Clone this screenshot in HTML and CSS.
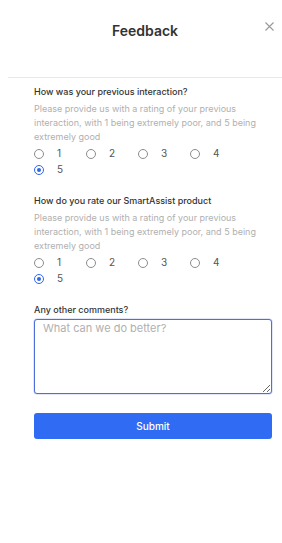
FILE: index.html
```html
<!DOCTYPE html>
<html lang="en">
<head>
<meta charset="utf-8">
<title>Feedback</title>
<link rel="stylesheet" href="styles.css">
</head>
<body>
<div class="panel">
  <header class="header">
    <h1 class="title">Feedback</h1>
    <button class="close" aria-label="Close">
      <svg width="9" height="9" viewBox="0 0 9 9"><path d="M0.5 0.5L8.5 8.5M8.5 0.5L0.5 8.5" stroke="#9a9a9a" stroke-width="1.1" fill="none"/></svg>
    </button>
  </header>
  <main class="content">
    <section class="question">
      <div class="q-title">How was your previous interaction?</div>
      <div class="q-desc">Please provide us with a rating of your previous interaction, with 1 being extremely poor, and 5 being extremely good</div>
      <div class="options">
        <label class="opt"><span class="radio"></span><span class="num">1</span></label>
        <label class="opt"><span class="radio"></span><span class="num">2</span></label>
        <label class="opt"><span class="radio"></span><span class="num">3</span></label>
        <label class="opt"><span class="radio"></span><span class="num">4</span></label>
        <label class="opt"><span class="radio checked"></span><span class="num">5</span></label>
      </div>
    </section>
    <section class="question">
      <div class="q-title">How do you rate our SmartAssist product</div>
      <div class="q-desc">Please provide us with a rating of your previous interaction, with 1 being extremely poor, and 5 being extremely good</div>
      <div class="options">
        <label class="opt"><span class="radio"></span><span class="num">1</span></label>
        <label class="opt"><span class="radio"></span><span class="num">2</span></label>
        <label class="opt"><span class="radio"></span><span class="num">3</span></label>
        <label class="opt"><span class="radio"></span><span class="num">4</span></label>
        <label class="opt"><span class="radio checked"></span><span class="num">5</span></label>
      </div>
    </section>
    <section class="comments">
      <div class="q-title">Any other comments?</div>
      <textarea class="input" placeholder="What can we do better?"></textarea>
    </section>
    <button class="submit">Submit</button>
  </main>
</div>
</body>
</html>
```
FILE: styles.css
```css
* { box-sizing: border-box; }
html, body { margin: 0; padding: 0; background: #fff; }
body { font-family: Inter, "Noto Sans", sans-serif; color: #333; }

.panel { width: 282px; height: 543px; }

.header {
  height: 78px;
  margin-left: 8px;
  border-bottom: 1px solid #e8e8e8;
  display: flex;
  justify-content: center;
  align-items: flex-start;
  position: relative;
}
.title {
  margin: 22px 0 0 0;
  font-size: 14px;
  line-height: 18px;
  font-weight: 600;
  color: #333;
}
.close {
  position: absolute;
  top: 22px;
  right: 8px;
  padding: 0;
  border: 0;
  background: none;
  width: 9px;
  height: 9px;
  display: block;
}
.close svg { display: block; }

.content { padding: 7px 10px 0 34px; }

.question { margin-bottom: 16px; }
.q-title {
  font-size: 9px;
  line-height: 14px;
  font-weight: 500;
  color: #333;
}
.q-desc {
  margin-top: 3px;
  font-size: 9px;
  line-height: 14px;
  color: #b0b0b0;
}
.options {
  display: flex;
  flex-wrap: wrap;
  margin-top: 2px;
}
.opt {
  width: 52px;
  height: 16px;
  display: flex;
  align-items: center;
}
.radio {
  width: 10px;
  height: 10px;
  border: 1px solid #8c8c8c;
  border-radius: 50%;
  flex: none;
  position: relative;
}
.radio.checked {
  border: 1.5px solid #2f66e8;
}
.radio.checked::after {
  content: "";
  position: absolute;
  left: 1.5px;
  top: 1.5px;
  width: 4px;
  height: 4px;
  border-radius: 50%;
  background: #2f66e8;
}
.num {
  margin-left: 13px;
  font-size: 10px;
  line-height: 12px;
  color: #555;
  position: relative;
  top: -1px;
}

.input {
  display: block;
  width: 238px;
  height: 75px;
  margin-top: 2px;
  padding: 1px 8px;
  border: 1px solid #4f6fd6;
  border-radius: 3px;
  box-shadow: 0 0 0 0.5px rgba(79,111,214,0.35);
  font-family: Inter, "Noto Sans", sans-serif;
  font-size: 11px;
  line-height: 14px;
  color: #333;
  outline: none;
}
.input::placeholder { color: #b0b0b0; }

.submit {
  display: block;
  width: 238px;
  height: 26px;
  margin-top: 19px;
  border: 0;
  border-radius: 3px;
  background: #2f6cf3;
  color: #fff;
  font-family: Inter, "Noto Sans", sans-serif;
  font-size: 10px;
  font-weight: 500;
  padding: 0;
}
```
